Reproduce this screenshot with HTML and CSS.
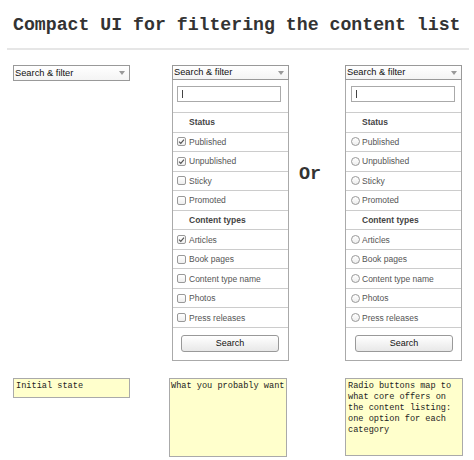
FILE: index.html
```html
<!DOCTYPE html>
<html>
<head>
<meta charset="utf-8">
<link rel="stylesheet" href="styles.css">
</head>
<body>
<h1 class="title">Compact UI for filtering the content list</h1>
<div class="divider"></div>

<div class="mockups">
  <div class="col col1">
    <div class="select standalone"><span>Search &amp; filter</span><span class="arrow"></span></div>
  </div>

  <div class="col col2">
    <div class="panel">
      <div class="select"><span>Search &amp; filter</span><span class="arrow"></span></div>
      <div class="search-row"><div class="input"><span class="caret"></span></div></div>
      <div class="row heading">Status</div>
      <div class="row"><span class="box on"><svg viewBox="0 0 9 9"><path d="M2 4.6 L3.8 6.4 L7 2.6" fill="none" stroke="#555" stroke-width="1.2"/></svg></span>Published</div>
      <div class="row"><span class="box on"><svg viewBox="0 0 9 9"><path d="M2 4.6 L3.8 6.4 L7 2.6" fill="none" stroke="#555" stroke-width="1.2"/></svg></span>Unpublished</div>
      <div class="row"><span class="box"></span>Sticky</div>
      <div class="row"><span class="box"></span>Promoted</div>
      <div class="row heading">Content types</div>
      <div class="row"><span class="box on"><svg viewBox="0 0 9 9"><path d="M2 4.6 L3.8 6.4 L7 2.6" fill="none" stroke="#555" stroke-width="1.2"/></svg></span>Articles</div>
      <div class="row"><span class="box"></span>Book pages</div>
      <div class="row"><span class="box"></span>Content type name</div>
      <div class="row"><span class="box"></span>Photos</div>
      <div class="row"><span class="box"></span>Press releases</div>
      <div class="button-row"><div class="button">Search</div></div>
    </div>
  </div>

  <div class="or">Or</div>

  <div class="col col3">
    <div class="panel radios">
      <div class="select"><span>Search &amp; filter</span><span class="arrow"></span></div>
      <div class="search-row"><div class="input"><span class="caret"></span></div></div>
      <div class="row heading">Status</div>
      <div class="row"><span class="radio"></span>Published</div>
      <div class="row"><span class="radio"></span>Unpublished</div>
      <div class="row"><span class="radio"></span>Sticky</div>
      <div class="row"><span class="radio"></span>Promoted</div>
      <div class="row heading">Content types</div>
      <div class="row"><span class="radio"></span>Articles</div>
      <div class="row"><span class="radio"></span>Book pages</div>
      <div class="row"><span class="radio"></span>Content type name</div>
      <div class="row"><span class="radio"></span>Photos</div>
      <div class="row"><span class="radio"></span>Press releases</div>
      <div class="button-row"><div class="button">Search</div></div>
    </div>
  </div>
</div>

<div class="notes">
  <div class="note n1">Initial state</div>
  <div class="note n2">What you probably want</div>
  <div class="note n3">Radio buttons map to what core offers on the content listing: one option for each category</div>
</div>
</body>
</html>
```

FILE: styles.css
```css
html, body {
  margin: 0;
  padding: 0;
  background: #fff;
}
body {
  width: 474px;
  height: 460px;
  overflow: hidden;
  font-family: "Liberation Sans", Arial, sans-serif;
}
.title {
  margin: 0;
  padding: 14px 0 0 13px;
  font-family: "Liberation Mono", "Courier New", monospace;
  font-weight: bold;
  font-size: 18.2px;
  line-height: 22px;
  color: #333;
  white-space: nowrap;
}
.divider {
  margin: 12px 5px 0 7px;
  height: 2px;
  background: #e6e6e6;
}
.mockups {
  display: grid;
  grid-template-columns: 117px 42px 117px 56px 117px;
  padding: 15px 0 0 13px;
  align-items: start;
}
.col1 { grid-column: 1; }
.col2 { grid-column: 3; }
.or {
  grid-column: 4;
  padding: 100px 0 0 10px;
  font-family: "Liberation Mono", "Courier New", monospace;
  font-weight: bold;
  font-size: 18.5px;
  line-height: 20px;
  color: #333;
}
.col3 { grid-column: 5; }

.select {
  position: relative;
  box-sizing: border-box;
  height: 15px;
  border: 1px solid #999;
  background: linear-gradient(#fff, #f4f4f4);
  font-size: 9.3px;
  line-height: 13px;
  color: #111;
  padding-left: 1px;
  white-space: nowrap;
}
.select.standalone { height: 16px; line-height: 14px; }
.arrow {
  position: absolute;
  right: 4px;
  top: 5px;
  width: 0;
  height: 0;
  border-left: 3px solid transparent;
  border-right: 3px solid transparent;
  border-top: 4px solid #999;
}
.panel {
  box-sizing: border-box;
  border: 1px solid #aaa;
  border-top: none;
  background: #fff;
}
.panel .select {
  margin: 0 -1px;
}
.search-row {
  padding: 6px 0 10px 4px;
  border-bottom: 1px solid #ccc;
}
.radios .search-row { padding-left: 5px; }
.input {
  box-sizing: border-box;
  width: 104px;
  height: 16px;
  border: 1px solid #aaa;
  background: #fff;
  padding: 3px 0 0 4px;
}
.caret {
  display: block;
  width: 1px;
  height: 8px;
  background: #444;
}
.row {
  display: flex;
  align-items: center;
  box-sizing: border-box;
  height: 19.55px;
  border-bottom: 1px solid #ccc;
  padding-left: 4px;
  font-size: 8.5px;
  color: #555;
  white-space: nowrap;
}
.radios .row { padding-left: 5px; }
.row.heading {
  padding-left: 16px;
  font-weight: bold;
  color: #444;
}
.radios .row.heading { padding-left: 16px; }
.box {
  box-sizing: border-box;
  width: 9px;
  height: 9px;
  border: 1px solid #999;
  border-radius: 2px;
  background: linear-gradient(#fff, #eee);
  margin-right: 3px;
  position: relative;
  flex: none;
}
.box svg {
  position: absolute;
  left: -1px;
  top: -1px;
  width: 9px;
  height: 9px;
}
.radio {
  box-sizing: border-box;
  width: 9px;
  height: 9px;
  border: 1px solid #999;
  border-radius: 50%;
  background: linear-gradient(#fff, #eee);
  margin-right: 2px;
  flex: none;
}
.button-row {
  padding: 7px 0 8px 8px;
}
.radios .button-row { padding-left: 9px; }
.button {
  box-sizing: border-box;
  width: 98px;
  height: 17px;
  border: 1px solid #999;
  border-radius: 3px;
  background: linear-gradient(#fff, #e8e8e8);
  text-align: center;
  font-size: 9px;
  line-height: 15px;
  color: #111;
}

.notes {
  display: grid;
  grid-template-columns: 117px 39px 118px 58px 118px;
  padding: 17px 0 0 13px;
  align-items: start;
}
.note {
  box-sizing: border-box;
  border: 1px solid #aaa;
  background: #ffffcc;
  font-family: "Liberation Mono", "Courier New", monospace;
  font-size: 8.6px;
  line-height: 11px;
  color: #222;
  padding: 2px 2px 0 2px;
}
.n1 { grid-column: 1; height: 20px; }
.n2 { grid-column: 3; height: 79px; white-space: nowrap; padding-left: 1px; }
.n3 { grid-column: 5; height: 78px; }
```
